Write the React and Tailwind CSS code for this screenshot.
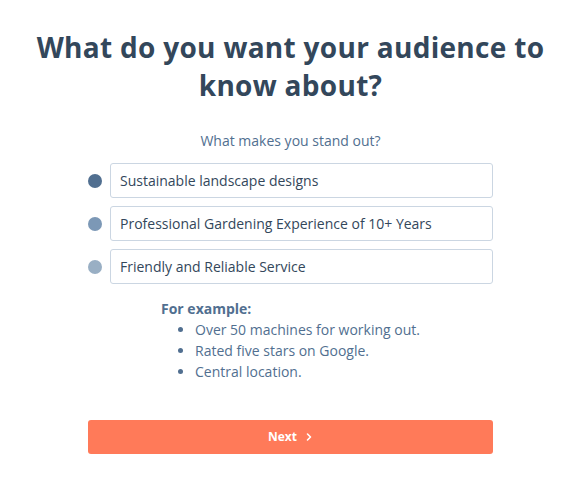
import React from "react";

const items = [
  { text: "Sustainable landscape designs", dot: "bg-[#516f90]" },
  { text: "Professional Gardening Experience of 10+ Years", dot: "bg-[#7c98b6]" },
  { text: "Friendly and Reliable Service", dot: "bg-[#99afc4]" },
];

export default function App() {
  return (
    <div
      className="w-[577px] h-[500px] bg-white pl-[4px] text-[#33475b]"
      style={{ fontFamily: '"Open Sans", "Liberation Sans", sans-serif' }}
    >
      <div className="flex flex-col items-center pt-[28px]">
        <h1 className="text-[28px] leading-[38px] font-bold tracking-[0.3px] text-center text-[#33475b] w-[530px]">
          What do you want your audience to know about?
        </h1>
        <p className="mt-[27px] text-[14px] leading-[20px] text-[#516f90]">
          What makes you stand out?
        </p>
        <div className="mt-[12px] w-[405px] flex flex-col gap-[8px]">
          {items.map((it) => (
            <div key={it.text} className="flex items-center gap-[8px]">
              <span className={`w-[14px] h-[14px] rounded-full shrink-0 ${it.dot}`} />
              <div className="flex-1 h-[35px] border border-[#cbd6e2] rounded-[3px] px-[9px] flex items-center text-[14px] text-[#33475b]">
                {it.text}
              </div>
            </div>
          ))}
        </div>
        <div className="mt-[14px] text-[14px] leading-[21px] text-[#516f90] self-center">
          <div className="font-bold">For example:</div>
          <ul className="pl-[34px] list-disc">
            <li>Over 50 machines for working out.</li>
            <li>Rated five stars on Google.</li>
            <li>Central location.</li>
          </ul>
        </div>
        <button className="mt-[38px] w-[405px] h-[34px] rounded-[3px] bg-[#ff7a59] text-white text-[12px] font-bold flex items-center justify-center gap-[8px]">
          Next
          <svg width="8" height="10" viewBox="0 0 8 10" fill="none">
            <path d="M2.5 2 L5.5 5 L2.5 8" stroke="white" strokeWidth="1.6" strokeLinecap="round" strokeLinejoin="round" />
          </svg>
        </button>
      </div>
    </div>
  );
}
